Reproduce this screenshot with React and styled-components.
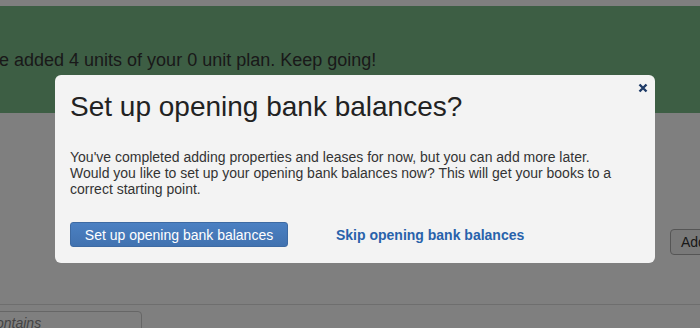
import React from "react";
import styled, { createGlobalStyle } from "styled-components";

const Global = createGlobalStyle`
  html, body { margin: 0; padding: 0; }
  body {
    width: 700px;
    height: 328px;
    overflow: hidden;
    background: #ffffff;
    font-family: "Liberation Sans", Arial, sans-serif;
    color: #333;
  }
`;

const Page = styled.div`
  position: relative;
  width: 700px;
  height: 328px;
  overflow: hidden;
  display: flex;
  flex-direction: column;
  padding-top: 6px;
  box-sizing: border-box;
  & > * { flex-shrink: 0; }
`;

const Banner = styled.div`
  height: 107px;
  background: #7bbc89;
  display: flex;
  align-items: flex-start;
  padding-top: 43px;
  box-sizing: border-box;
`;

const BannerText = styled.div`
  font-size: 18px;
  line-height: 22px;
  color: #333;
  white-space: nowrap;
  margin-left: -1px;
`;

const Toolbar = styled.div`
  height: 192px;
  display: flex;
  justify-content: flex-end;
  align-items: flex-start;
  padding-top: 116px;
  box-sizing: border-box;
  border-bottom: 1px solid #dcdcdc;
`;

const GhostButton = styled.button`
  width: 48px;
  height: 26px;
  margin-right: -18px;
  border: 1px solid #aaa;
  border-radius: 4px;
  background: #f2f2f2;
  font-family: "Liberation Sans", Arial, sans-serif;
  font-size: 14px;
  color: #333;
  text-align: left;
  padding: 0 0 0 10px;
`;

const FilterRow = styled.div`
  padding-top: 6px;
`;

const FilterInput = styled.div`
  width: 158px;
  height: 28px;
  margin-left: -16px;
  border: 1px solid #ccc;
  border-radius: 4px;
  background: #fff;
  box-sizing: border-box;
  padding: 3px 0 0 4px;
  font-size: 14px;
  font-style: italic;
  color: #888;
`;

const Overlay = styled.div`
  position: absolute;
  inset: 0;
  background: rgba(0, 0, 0, 0.5);
  display: flex;
  align-items: flex-start;
  padding: 75px 0 0 55px;
  box-sizing: border-box;
`;

const Modal = styled.div`
  position: relative;
  width: 600px;
  height: 188px;
  background: #f3f3f3;
  border-radius: 6px;
  padding: 15px 15px 0 15px;
  box-sizing: border-box;
`;

const Close = styled.button`
  position: absolute;
  top: 7px;
  right: 6px;
  width: 12px;
  height: 12px;
  padding: 0;
  border: 0;
  background: transparent;
  display: flex;
  align-items: center;
  justify-content: center;
`;

const Title = styled.h2`
  margin: 0;
  font-size: 28px;
  font-weight: 400;
  line-height: 34px;
  color: #222;
`;

const Body = styled.p`
  margin: 25px 0 0 0;
  font-size: 14px;
  line-height: 16px;
  color: #333;
  white-space: nowrap;
`;

const Actions = styled.div`
  display: flex;
  align-items: center;
  gap: 48px;
  margin-top: 25px;
`;

const Primary = styled.button`
  height: 25px;
  width: 218px;
  border: 1px solid #3d6aa3;
  border-radius: 3px;
  background: linear-gradient(#4b80c2, #4172b0);
  color: #fff;
  font-family: "Liberation Sans", Arial, sans-serif;
  font-size: 14px;
  padding: 0;
`;

const SkipLink = styled.a`
  font-size: 14px;
  font-weight: 700;
  color: #2862ab;
  text-decoration: none;
`;

export default function App() {
  return (
    <>
      <Global />
      <Page>
        <Banner>
          <BannerText>e added 4 units of your 0 unit plan. Keep going!</BannerText>
        </Banner>
        <Toolbar>
          <GhostButton>Add</GhostButton>
        </Toolbar>
        <FilterRow>
          <FilterInput>contains</FilterInput>
        </FilterRow>
        <Overlay>
          <Modal>
            <Close aria-label="Close">
              <svg width="10" height="10" viewBox="0 0 10 10">
                <path d="M1.5 1.5 L8.5 8.5 M8.5 1.5 L1.5 8.5" stroke="#1d3a66" strokeWidth="2.4" strokeLinecap="butt" />
              </svg>
            </Close>
            <Title>Set up opening bank balances?</Title>
            <Body>
              You've completed adding properties and leases for now, but you can add more later.
              <br />
              Would you like to set up your opening bank balances now? This will get your books to a
              <br />
              correct starting point.
            </Body>
            <Actions>
              <Primary>Set up opening bank balances</Primary>
              <SkipLink href="#">Skip opening bank balances</SkipLink>
            </Actions>
          </Modal>
        </Overlay>
      </Page>
    </>
  );
}
